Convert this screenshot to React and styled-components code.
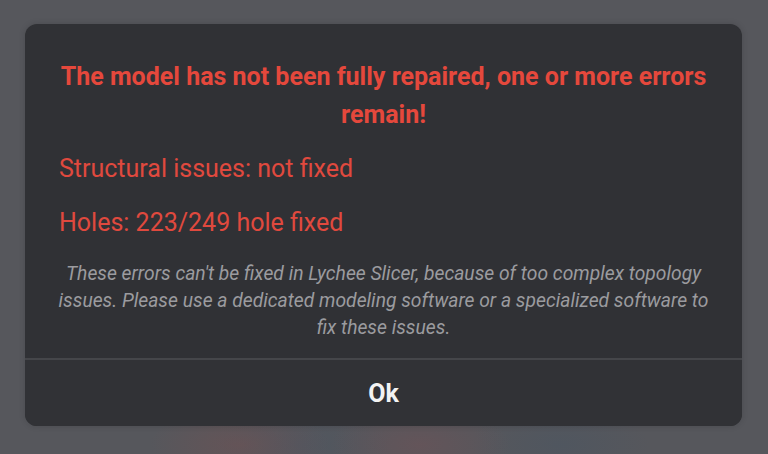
import React from "react";
import styled, { createGlobalStyle } from "styled-components";

const Global = createGlobalStyle`
  html, body { margin: 0; padding: 0; }
  body {
    width: 768px;
    height: 454px;
    overflow: hidden;
    font-family: Roboto, "Noto Sans", sans-serif;
    background: #56575c;
  }
`;

const Backdrop = styled.div`
  width: 768px;
  height: 454px;
  box-sizing: border-box;
  padding: 24px 26px 28px 25px;
  background:
    radial-gradient(ellipse 90px 40px at 240px 445px, rgba(120, 80, 80, 0.45), transparent),
    radial-gradient(ellipse 90px 40px at 420px 445px, rgba(120, 80, 85, 0.4), transparent),
    radial-gradient(ellipse 90px 40px at 300px 445px, rgba(70, 85, 100, 0.4), transparent),
    radial-gradient(ellipse 90px 40px at 560px 445px, rgba(70, 85, 100, 0.4), transparent),
    #56575c;
  display: flex;
`;

const Dialog = styled.div`
  flex: 1;
  display: flex;
  flex-direction: column;
  background: #303135;
  border-radius: 12px;
  overflow: hidden;
  box-shadow: 0 0 6px rgba(0, 0, 0, 0.15);
`;

const Body = styled.div`
  display: flex;
  flex-direction: column;
  padding: 34px 22px 0;
  height: 334px;
  box-sizing: border-box;
`;

const Title = styled.h1`
  margin: 0;
  padding: 0 4px;
  font-size: 25px;
  font-weight: 700;
  line-height: 38px;
  color: #e5483c;
  text-align: center;
`;

const Status = styled.p`
  margin: ${(p) => p.$top}px 0 0;
  padding: 0 12px;
  font-size: 25px;
  line-height: 30px;
  color: #e0493e;
  font-weight: 400;
`;

const Note = styled.p`
  margin: 22px 0 0;
  padding: 0 6px;
  font-size: 19.3px;
  font-style: italic;
  line-height: 27px;
  color: #9b9b9f;
  text-align: center;
`;

const Footer = styled.button`
  flex: 1;
  border: none;
  border-top: 2px solid #45464a;
  background: #313236;
  color: #f3f3f3;
  font-family: Roboto, "Noto Sans", sans-serif;
  font-size: 25px;
  font-weight: 700;
  display: flex;
  align-items: center;
  justify-content: center;
  cursor: pointer;
  padding: 0;
`;

export default function App() {
  return (
    <>
      <Global />
      <Backdrop>
        <Dialog>
          <Body>
            <Title>
              The model has not been fully repaired, one or more errors remain!
            </Title>
            <Status $top={20}>Structural issues: not fixed</Status>
            <Status $top={24}>Holes: 223/249 hole fixed</Status>
            <Note>
              These errors can't be fixed in Lychee Slicer, because of too complex
              topology issues. Please use a dedicated modeling software or a
              specialized software to fix these issues.
            </Note>
          </Body>
          <Footer>Ok</Footer>
        </Dialog>
      </Backdrop>
    </>
  );
}
